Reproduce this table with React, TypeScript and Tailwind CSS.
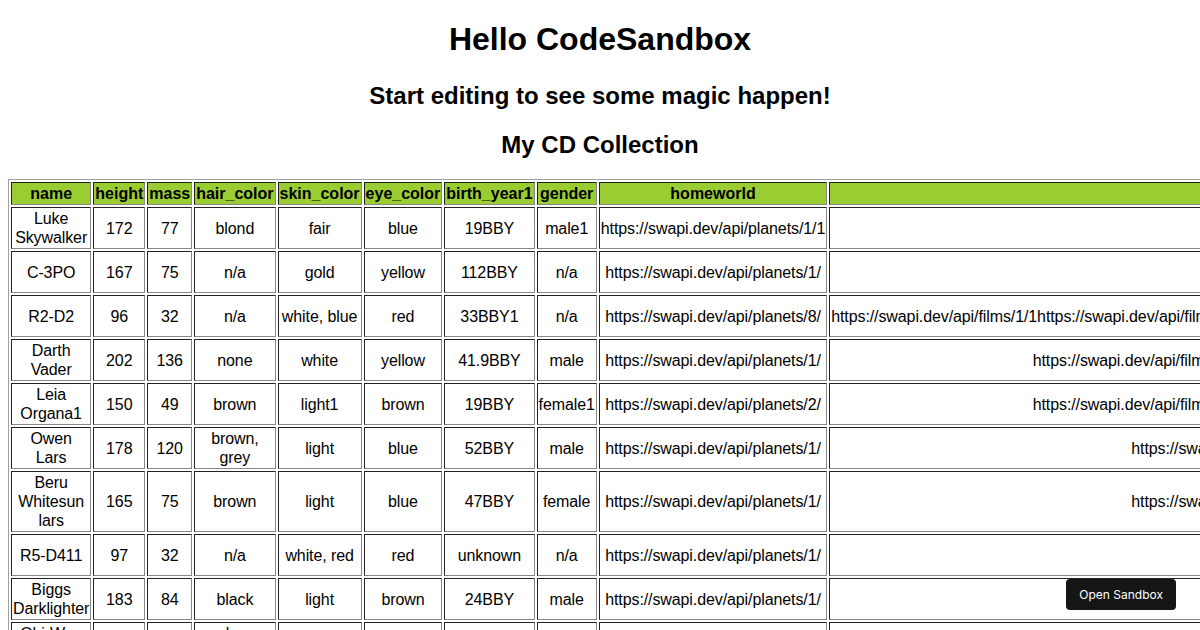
import React from "react";

const F = (n: number[]) => n.map((i) => `https://swapi.dev/api/films/${i}/`).join("");

type Row = {
  name: string;
  height: string;
  mass: string;
  hair: string;
  skin: string;
  eye: string;
  birth: string;
  gender: string;
  home: string;
  films: string;
};

const rows: Row[] = [
  { name: "Luke Skywalker", height: "172", mass: "77", hair: "blond", skin: "fair", eye: "blue", birth: "19BBY", gender: "male1", home: "https://swapi.dev/api/planets/1/1", films: F([1]) },
  { name: "C-3PO", height: "167", mass: "75", hair: "n/a", skin: "gold", eye: "yellow", birth: "112BBY", gender: "n/a", home: "https://swapi.dev/api/planets/1/", films: F([2]) },
  { name: "R2-D2", height: "96", mass: "32", hair: "n/a", skin: "white, blue", eye: "red", birth: "33BBY1", gender: "n/a", home: "https://swapi.dev/api/planets/8/", films: "https://swapi.dev/api/films/1/1" + F([2, 3, 4, 5, 6]) },
  { name: "Darth Vader", height: "202", mass: "136", hair: "none", skin: "white", eye: "yellow", birth: "41.9BBY", gender: "male", home: "https://swapi.dev/api/planets/1/", films: F([1, 2, 3, 6]) },
  { name: "Leia Organa1", height: "150", mass: "49", hair: "brown", skin: "light1", eye: "brown", birth: "19BBY", gender: "female1", home: "https://swapi.dev/api/planets/2/", films: F([1, 2, 3, 6]) },
  { name: "Owen Lars", height: "178", mass: "120", hair: "brown, grey", skin: "light", eye: "blue", birth: "52BBY", gender: "male", home: "https://swapi.dev/api/planets/1/", films: F([1, 5, 6]) },
  { name: "Beru Whitesun lars", height: "165", mass: "75", hair: "brown", skin: "light", eye: "blue", birth: "47BBY", gender: "female", home: "https://swapi.dev/api/planets/1/", films: F([1, 5, 6]) },
  { name: "R5-D411", height: "97", mass: "32", hair: "n/a", skin: "white, red", eye: "red", birth: "unknown", gender: "n/a", home: "https://swapi.dev/api/planets/1/", films: F([1]) },
  { name: "Biggs Darklighter", height: "183", mass: "84", hair: "black", skin: "light", eye: "brown", birth: "24BBY", gender: "male", home: "https://swapi.dev/api/planets/1/", films: F([1]) },
  { name: "Obi-Wan Kenobi", height: "182", mass: "77", hair: "auburn, white", skin: "fair", eye: "blue-gray", birth: "57BBY", gender: "male", home: "https://swapi.dev/api/planets/20/", films: F([1, 2, 3, 4, 5, 6]) },
];

const border =
  "border border-t-[#222222] border-l-[#222222] border-r-[#888888] border-b-[#888888] p-[1px] leading-[19px]";
const th = border + " bg-[#9acd32] font-bold text-center";
const cell = border + " tracking-[-0.1px]";

export default function App() {
  return (
    <div className="h-screen w-full overflow-hidden bg-white text-black font-['Liberation_Sans',Arial,sans-serif] text-[16px] leading-[normal]">
      <div className="px-2 text-center">
        <h1 className="text-[32px] font-bold leading-[normal] mt-[21px] mb-[24px]">Hello CodeSandbox</h1>
        <h2 className="text-[24px] font-bold leading-[normal] mt-[24px] mb-[21px]">Start editing to see some magic happen!</h2>
        <h2 className="text-[24px] font-bold leading-[normal] mt-[21px] mb-[20px]">My CD Collection</h2>
        <table className="border-separate border-spacing-[2px] border border-t-[#a0a0a0] border-l-[#a0a0a0] border-r-[#555555] border-b-[#555555]">
          <thead>
            <tr>
              <th className={th}>name</th>
              <th className={th}>height</th>
              <th className={th}>mass</th>
              <th className={th}>hair_color</th>
              <th className={th}>skin_color</th>
              <th className={th}>eye_color</th>
              <th className={th}>birth_year1</th>
              <th className={th}>gender</th>
              <th className={th}>homeworld</th>
              <th className={th}>films</th>
              <th className={th}>created</th>
            </tr>
          </thead>
          <tbody>
            {rows.map((r) => (
              <tr key={r.name}>
                <td className={cell}>{r.name}</td>
                <td className={cell}>{r.height}</td>
                <td className={cell}>{r.mass}</td>
                <td className={cell}>{r.hair}</td>
                <td className={cell}>{r.skin}</td>
                <td className={cell}>{r.eye}</td>
                <td className={cell}>{r.birth}</td>
                <td className={cell}>{r.gender}</td>
                <td className={cell}>{r.home}</td>
                <td className={cell}>{r.films}</td>
                <td className={cell + " whitespace-nowrap"}>
                  <div className="h-[38px] flex items-center">2014-12-09T13:50:51</div>
                </td>
              </tr>
            ))}
          </tbody>
        </table>
      </div>
      <button className="fixed bottom-[20px] right-[24px] h-[31px] px-[13px] rounded-[4px] bg-[#151515] text-white text-[12px] font-['Inter',sans-serif]">
        Open Sandbox
      </button>
    </div>
  );
}
